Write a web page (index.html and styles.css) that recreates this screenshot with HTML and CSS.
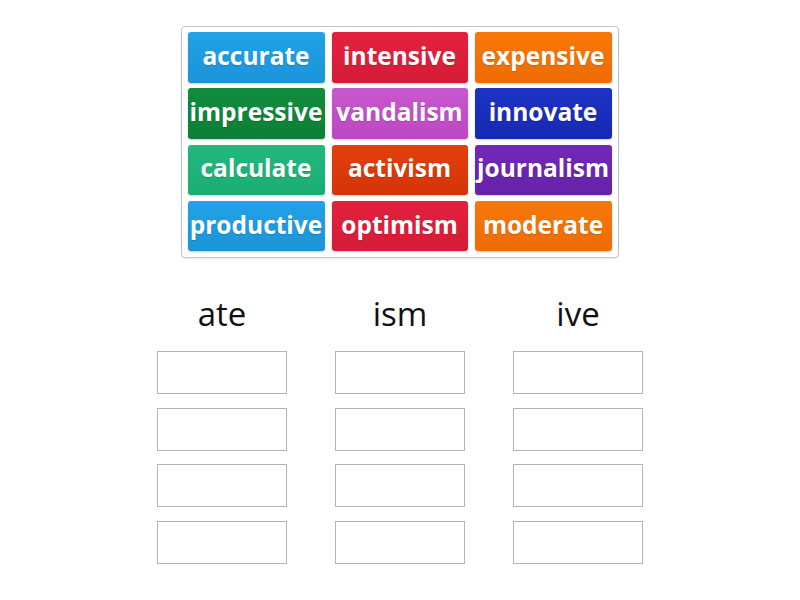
FILE: index.html
```html
<!DOCTYPE html>
<html>
<head>
<meta charset="utf-8">
<link rel="stylesheet" href="styles.css">
</head>
<body>
<div class="page">
  <div class="bank">
    <div class="tile c-blue">accurate</div>
    <div class="tile c-red">intensive</div>
    <div class="tile c-orange">expensive</div>
    <div class="tile c-green">impressive</div>
    <div class="tile c-pink">vandalism</div>
    <div class="tile c-navy">innovate</div>
    <div class="tile c-teal">calculate</div>
    <div class="tile c-rust">activism</div>
    <div class="tile c-purple">journalism</div>
    <div class="tile c-blue">productive</div>
    <div class="tile c-red">optimism</div>
    <div class="tile c-orange">moderate</div>
  </div>
  <div class="groups">
    <div class="group">
      <div class="group-title">ate</div>
      <div class="slot"></div><div class="slot"></div><div class="slot"></div><div class="slot"></div>
    </div>
    <div class="group">
      <div class="group-title">ism</div>
      <div class="slot"></div><div class="slot"></div><div class="slot"></div><div class="slot"></div>
    </div>
    <div class="group">
      <div class="group-title">ive</div>
      <div class="slot"></div><div class="slot"></div><div class="slot"></div><div class="slot"></div>
    </div>
  </div>
</div>
</body>
</html>
```
FILE: styles.css
```css
html, body {
  margin: 0;
  padding: 0;
  background: #ffffff;
}
body {
  font-family: "Open Sans", "Noto Sans", sans-serif;
}
.page {
  width: 800px;
  height: 600px;
  display: flex;
  flex-direction: column;
  align-items: center;
}
.bank {
  margin-top: 26px;
  margin-left: -1px;
  width: 424px;
  padding: 5px 6px 6px 6px;
  border: 1px solid #c4c4c4;
  border-radius: 4px;
  display: grid;
  grid-template-columns: 137px 136px 137px;
  grid-auto-rows: 50.5px;
  column-gap: 7px;
  row-gap: 5.8px;
  box-shadow: 0 1px 2px rgba(0,0,0,0.08);
}
.tile {
  border-radius: 3px;
  color: #ffffff;
  font-weight: 700;
  font-size: 24.5px;
  letter-spacing: 0;
  display: flex;
  align-items: center;
  justify-content: center;
  white-space: nowrap;
  padding-bottom: 4px;
  box-sizing: border-box;
  text-shadow: 0 1px 1px rgba(0,0,0,0.15);
  box-shadow: 0 1px 2px rgba(0,0,0,0.2);
}
.c-blue { background: linear-gradient(#22a2e8, #1b94d9); }
.c-red { background: linear-gradient(#e3213f, #d51c37); }
.c-orange { background: linear-gradient(#f77808, #ee6c02); }
.c-green { background: linear-gradient(#138c3e, #0c7f35); }
.c-pink { background: linear-gradient(#c957ce, #bc47c2); }
.c-navy { background: linear-gradient(#1d33c3, #1629b3); }
.c-teal { background: linear-gradient(#22b97e, #1aad72); }
.c-rust { background: linear-gradient(#e2400e, #d53408); }
.c-purple { background: linear-gradient(#7229b8, #6522aa); }

.groups {
  margin-top: 36px;
  display: flex;
  gap: 48px;
}
.group {
  width: 130px;
  display: flex;
  flex-direction: column;
  align-items: stretch;
}
.group-title {
  font-size: 33px;
  line-height: 40px;
  color: #111111;
  text-align: center;
  margin-bottom: 17px;
}
.slot {
  height: 43px;
  box-sizing: border-box;
  border: 1px solid #b4b4b4;
  margin-bottom: 13.5px;
  background: #ffffff;
}
```
